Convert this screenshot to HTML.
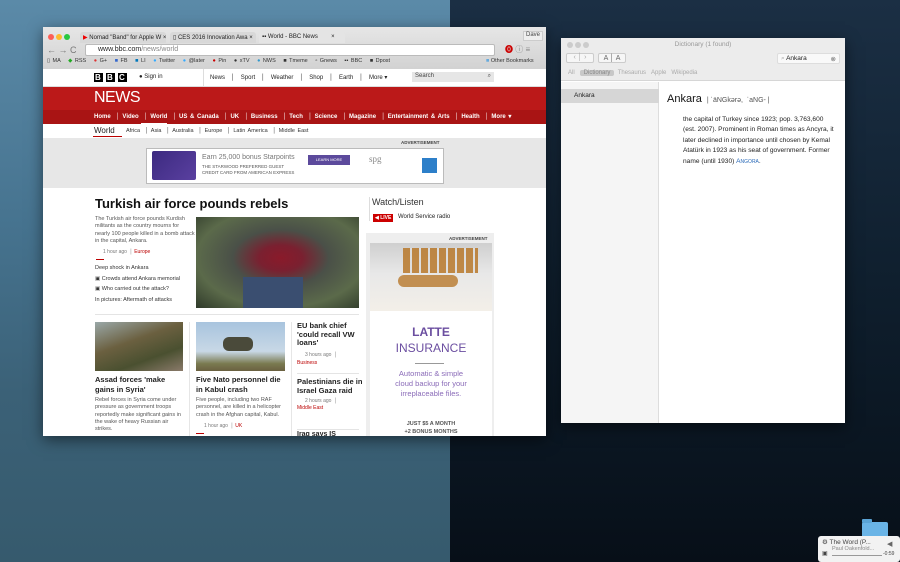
<!DOCTYPE html>
<html><head><meta charset="utf-8"><style>
*{margin:0;padding:0;box-sizing:border-box}
body{width:900px;height:562px;overflow:hidden;position:relative;font-family:"Liberation Sans",Arial,sans-serif;background:#0b1622}
.a{position:absolute}
.bgl{left:0;top:0;width:450px;height:562px;background:linear-gradient(180deg,#5b8aa8 0%,#46738f 40%,#3b6177 70%,#365a6d 100%)}
.bgr{left:450px;top:0;width:450px;height:562px;background:linear-gradient(180deg,#1b2f44 0%,#0f1f2e 50%,#070f18 100%)}
.t{white-space:nowrap}
</style></head><body>
<div class="a bgl"></div><div class="a bgr"></div>
<!-- browser -->
<div class="a" style="left:43px;top:27px;width:503px;height:409px;background:#fff;overflow:hidden;box-shadow:0 4px 14px rgba(0,0,0,.5)">
 <div class="a" style="left:0;top:0;width:503px;height:42px;background:linear-gradient(#e6e6e6,#d2d2d2)"></div>
 <div class="a" style="left:5px;top:7px;width:6px;height:6px;border-radius:50%;background:#fc5f57"></div>
 <div class="a" style="left:13px;top:7px;width:6px;height:6px;border-radius:50%;background:#fdbb2e"></div>
 <div class="a" style="left:21px;top:7px;width:6px;height:6px;border-radius:50%;background:#2ac840"></div>
 <div class="a t" style="left:37px;top:5px;width:86px;height:11px;background:#d8d8d8;border-radius:3px 3px 0 0;font-size:6px;padding:2px 3px;color:#222"><span style="color:#e00">▶</span> Nomad "Band" for Apple W ×</div>
 <div class="a t" style="left:127px;top:5px;width:86px;height:11px;background:#d8d8d8;border-radius:3px 3px 0 0;font-size:6px;padding:2px 3px;color:#222">▯ CES 2016 Innovation Awa ×</div>
 <div class="a t" style="left:216px;top:5px;width:86px;height:11px;background:#e4e4e4;border-radius:3px 3px 0 0;font-size:6px;padding:2px 3px;color:#222">▪▪ World - BBC News &nbsp;&nbsp;&nbsp;&nbsp;&nbsp;&nbsp;&nbsp;×</div>
 <div class="a t" style="left:480px;top:4px;width:20px;height:10px;background:#eee;border:1px solid #ccc;font-size:6px;text-align:center;color:#444">Dave</div>
 <div class="a t" style="left:4px;top:18px;font-size:9px;color:#777">← → C</div>
 <div class="a t" style="left:42px;top:17px;width:410px;height:12px;background:#fff;border:1px solid #bbb;border-radius:2px;font-size:7px;padding:1px 12px;color:#222">www.bbc.com<span style="color:#888">/news/world</span></div>
 <div class="a t" style="left:462px;top:17px;font-size:8px;color:#c00">⓿ <span style="color:#888">ⓘ ≡</span></div>
 <div class="a t" style="left:4px;top:31px;font-size:5.5px;color:#333;word-spacing:1px">▯ MA &nbsp;&nbsp;<span style="color:#2a2">◆</span> RSS &nbsp;&nbsp;<span style="color:#d33">●</span> G+ &nbsp;&nbsp;<span style="color:#36c">■</span> FB &nbsp;&nbsp;<span style="color:#07b">■</span> LI &nbsp;&nbsp;<span style="color:#3af">●</span> Twitter &nbsp;&nbsp;<span style="color:#3af">●</span> @later &nbsp;&nbsp;<span style="color:#c00">●</span> Pin &nbsp;&nbsp;● xTV &nbsp;&nbsp;<span style="color:#39c">●</span> NWS &nbsp;&nbsp;■ Tmeme &nbsp;&nbsp;▫ Gnews &nbsp;&nbsp;▪▪ BBC &nbsp;&nbsp;■ Dpost</div>
 <div class="a t" style="left:443px;top:31px;font-size:5.5px;color:#333"><span style="color:#6ad">■</span> Other Bookmarks</div>
 <!-- bbc top -->
 <div class="a" style="left:0;top:42px;width:503px;height:18px;background:#fff;border-bottom:1px solid #ddd"></div>
 <div class="a t" style="left:51px;top:46px;font-size:8px;font-weight:bold;color:#fff;letter-spacing:1px"><span style="background:#000;padding:0 1px">B</span> <span style="background:#000;padding:0 1px">B</span> <span style="background:#000;padding:0 1px">C</span></div>
 <div class="a t" style="left:96px;top:47px;font-size:6px;color:#222">● Sign in</div>
 <div class="a t" style="left:160px;top:42px;height:18px;font-size:6px;color:#222;line-height:18px;border-left:1px solid #ddd"><span style="padding:0 6px">News</span>│<span style="padding:0 6px">Sport</span>│<span style="padding:0 6px">Weather</span>│<span style="padding:0 6px">Shop</span>│<span style="padding:0 6px">Earth</span>│<span style="padding:0 36px 0 6px">More ▾</span></div>
 <div class="a t" style="left:369px;top:45px;width:82px;height:10px;background:#e6e6e6;font-size:6px;padding:1px 3px;color:#444">Search <span style="float:right">⌕</span></div>
 <!-- red -->
 <div class="a" style="left:0;top:60px;width:503px;height:37px;background:#bb1919"></div>
 <div class="a" style="left:0;top:83px;width:503px;height:14px;background:#a91414"></div>
 <div class="a t" style="left:51px;top:62px;font-size:16px;color:#fff;letter-spacing:-0.5px">NEWS</div>
 <div class="a t" style="left:51px;top:86px;font-size:6px;font-weight:bold;color:#fff;word-spacing:1px">Home &nbsp;│ Video &nbsp;│ World &nbsp;│ US &amp; Canada &nbsp;│ UK &nbsp;│ Business &nbsp;│ Tech &nbsp;│ Science &nbsp;│ Magazine &nbsp;│ Entertainment &amp; Arts &nbsp;│ Health &nbsp;│ More ▾</div>
 <div class="a" style="left:98px;top:96px;width:26px;height:1px;background:#fff"></div>
 <div class="a t" style="left:51px;top:99px;font-size:8px;color:#222">World</div>
 <div class="a" style="left:50px;top:109px;width:29px;height:1px;background:#b00"></div>
 <div class="a t" style="left:83px;top:101px;font-size:5.5px;color:#333;word-spacing:1px">Africa &nbsp;│ Asia &nbsp;│ Australia &nbsp;│ Europe &nbsp;│ Latin America &nbsp;│ Middle East</div>
 <!-- ad band -->
 <div class="a" style="left:0;top:111px;width:503px;height:50px;background:#e7e7e7"></div>
 <div class="a t" style="left:358px;top:113px;font-size:4.5px;font-weight:bold;color:#444">ADVERTISEMENT</div>
 <div class="a" style="left:103px;top:121px;width:298px;height:36px;background:#fff;border:1px solid #bbb"></div>
 <div class="a" style="left:109px;top:124px;width:44px;height:29px;background:linear-gradient(135deg,#3c2a80,#5a40a0);border-radius:2px"></div>
 <div class="a t" style="left:159px;top:127px;font-size:7px;color:#777">Earn 25,000 bonus Starpoints</div>
 <div class="a t" style="left:159px;top:137px;font-size:4.5px;color:#555;line-height:6px">THE STARWOOD PREFERRED GUEST<br>CREDIT CARD FROM AMERICAN EXPRESS</div>
 <div class="a" style="left:265px;top:128px;width:42px;height:10px;background:#5c4a9c;font-size:4px;color:#fff;text-align:center;line-height:10px">LEARN MORE</div>
 <div class="a t" style="left:326px;top:127px;font-size:9px;color:#888;font-family:'Liberation Serif',serif">spg</div>
 <div class="a" style="left:379px;top:131px;width:15px;height:15px;background:#2d7fc9"></div>
 <!-- main -->
 <div class="a t" style="left:52px;top:169px;font-size:13px;font-weight:bold;color:#111">Turkish air force pounds rebels</div>
 <div class="a" style="left:52px;top:189px;width:100px;font-size:5.5px;color:#555;line-height:7.3px">The Turkish air force pounds Kurdish militants as the country mourns for nearly 100 people killed in a bomb attack in the capital, Ankara.</div>
 <div class="a t" style="left:60px;top:222px;font-size:5px;color:#777">1 hour ago &nbsp;│ <span style="color:#b00">Europe</span></div>
 <div class="a" style="left:53px;top:232px;width:8px;height:1px;background:#b00"></div>
 <div class="a t" style="left:52px;top:236px;font-size:5.5px;color:#333;line-height:10.6px">Deep shock in Ankara<br>▣ Crowds attend Ankara memorial<br>▣ Who carried out the attack?<br>In pictures: Aftermath of attacks</div>
 <div class="a" style="left:153px;top:190px;width:163px;height:91px;background:radial-gradient(ellipse at 52% 45%,#8a1a2a 0%,#7a2030 18%,#4a5048 40%,#5b6a4a 70%,#2f3a2a 100%)"></div>
 <div class="a" style="left:200px;top:250px;width:60px;height:31px;background:#3a4e70"></div>
 <div class="a" style="left:52px;top:287px;width:264px;height:1px;background:#e4e4e4"></div>
 <div class="a t" style="left:329px;top:170px;font-size:9px;color:#333">Watch/Listen</div>
 <div class="a" style="left:326px;top:170px;width:1px;height:24px;background:#ddd"></div>
 <div class="a t" style="left:330px;top:187px;font-size:5px;font-weight:bold;color:#fff;background:#c00;padding:1px 2px">◀ LIVE</div>
 <div class="a t" style="left:355px;top:187px;font-size:6px;color:#222">World Service radio</div>
 <!-- right ad -->
 <div class="a" style="left:323px;top:206px;width:128px;height:210px;background:#eee"></div>
 <div class="a t" style="left:406px;top:209px;font-size:4.5px;font-weight:bold;color:#444">ADVERTISEMENT</div>
 <div class="a" style="left:327px;top:216px;width:122px;height:68px;background:linear-gradient(180deg,#cfcfcf 0%,#e8e8e8 45%,#f3efe8 100%)"></div>
 <div class="a" style="left:360px;top:221px;width:75px;height:25px;background:repeating-linear-gradient(90deg,#b8782a 0 7px,#ddd 7px 9px);opacity:.85"></div>
 <div class="a" style="left:355px;top:248px;width:60px;height:12px;background:#b8782a;border-radius:6px;opacity:.8"></div>
 <div class="a" style="left:327px;top:284px;width:122px;height:130px;background:#fff"></div>
 <div class="a t" style="left:327px;top:298px;width:122px;text-align:center;font-size:12px;font-weight:bold;color:#6b4ea0">LATTE</div>
 <div class="a t" style="left:327px;top:314px;width:122px;text-align:center;font-size:12px;color:#6b4ea0">INSURANCE</div>
 <div class="a" style="left:372px;top:336px;width:29px;height:1px;background:#999"></div>
 <div class="a t" style="left:327px;top:342px;width:122px;text-align:center;font-size:7.5px;color:#8a6bb8;line-height:10px">Automatic &amp; simple<br>cloud backup for your<br>irreplaceable files.</div>
 <div class="a t" style="left:327px;top:393px;width:122px;text-align:center;font-size:5.5px;font-weight:bold;color:#555;line-height:8px">JUST $5 A MONTH<br>+2 BONUS MONTHS</div>
 <!-- row 2 -->
 <div class="a" style="left:52px;top:295px;width:88px;height:49px;background:linear-gradient(160deg,#9aa8a8 0%,#6b6040 40%,#4a5030 70%,#8a7a6a 100%)"></div>
 <div class="a" style="left:153px;top:295px;width:89px;height:49px;background:linear-gradient(180deg,#a8c4de 0%,#c8d8e6 60%,#7a7a50 85%,#6a6040 100%)"></div>
 <div class="a" style="left:180px;top:310px;width:30px;height:14px;background:#4a4a3a;border-radius:6px"></div>
 <div class="a" style="left:146px;top:295px;width:1px;height:114px;background:#e6e6e6"></div>
 <div class="a" style="left:248px;top:295px;width:1px;height:114px;background:#e6e6e6"></div>
 <div class="a" style="left:52px;top:348px;width:90px;font-size:7.5px;font-weight:bold;color:#222;line-height:10px">Assad forces 'make gains in Syria'</div>
 <div class="a" style="left:52px;top:370px;width:90px;font-size:5.5px;color:#555;line-height:7.3px">Rebel forces in Syria come under pressure as government troops reportedly make significant gains in the wake of heavy Russian air strikes.</div>
 <div class="a t" style="left:153px;top:348px;font-size:7.5px;font-weight:bold;color:#222;line-height:10px">Five Nato personnel die<br>in Kabul crash</div>
 <div class="a" style="left:153px;top:370px;width:92px;font-size:5.5px;color:#555;line-height:7.3px">Five people, including two RAF personnel, are killed in a helicopter crash in the Afghan capital, Kabul.</div>
 <div class="a t" style="left:161px;top:396px;font-size:5px;color:#777">1 hour ago &nbsp;│ <span style="color:#b00">UK</span></div>
 <div class="a" style="left:153px;top:406px;width:8px;height:1px;background:#b00"></div>
 <div class="a t" style="left:254px;top:295px;font-size:7.5px;font-weight:bold;color:#222;line-height:8.7px">EU bank chief<br>'could recall VW<br>loans'</div>
 <div class="a t" style="left:262px;top:325px;font-size:5px;color:#777">3 hours ago &nbsp;│</div>
 <div class="a t" style="left:254px;top:333px;font-size:5px;color:#b00">Business</div>
 <div class="a" style="left:254px;top:346px;width:62px;height:1px;background:#e4e4e4"></div>
 <div class="a t" style="left:254px;top:350px;font-size:7.5px;font-weight:bold;color:#222;line-height:9px">Palestinians die in<br>Israel Gaza raid</div>
 <div class="a t" style="left:262px;top:371px;font-size:5px;color:#777">2 hours ago &nbsp;│</div>
 <div class="a t" style="left:254px;top:378px;font-size:5px;color:#b00">Middle East</div>
 <div class="a" style="left:254px;top:402px;width:62px;height:1px;background:#e4e4e4"></div>
 <div class="a t" style="left:254px;top:404px;font-size:7px;font-weight:bold;color:#222">Iraq says IS</div>
</div>
<!-- dictionary -->
<div class="a" style="left:561px;top:38px;width:284px;height:385px;background:#fff;overflow:hidden;box-shadow:0 4px 14px rgba(0,0,0,.5)">
 <div class="a" style="left:0;top:0;width:284px;height:43px;background:#ececec;border-bottom:1px solid #d6d6d6"></div>
 <div class="a" style="left:6px;top:4px;width:6px;height:6px;border-radius:50%;background:#ccc"></div>
 <div class="a" style="left:14px;top:4px;width:6px;height:6px;border-radius:50%;background:#ccc"></div>
 <div class="a" style="left:22px;top:4px;width:6px;height:6px;border-radius:50%;background:#ccc"></div>
 <div class="a t" style="left:0;top:3px;width:284px;text-align:center;font-size:6.5px;color:#999">Dictionary (1 found)</div>
 <div class="a t" style="left:5px;top:15px;width:28px;height:10px;border:1px solid #ccc;border-radius:2px;background:#f6f6f6;font-size:7px;color:#aaa;text-align:center;line-height:8px">‹ │ ›</div>
 <div class="a t" style="left:37px;top:15px;width:28px;height:10px;border:1px solid #ccc;border-radius:2px;background:#f6f6f6;font-size:7px;color:#666;text-align:center;line-height:9px">A │ A</div>
 <div class="a t" style="left:216px;top:15px;width:63px;height:11px;border:1px solid #ddd;border-radius:2px;background:#f9f9f9;font-size:6.5px;color:#222;padding:1px 3px"><span style="color:#aaa">⌕</span> Ankara<span style="float:right;color:#666">⊗</span></div>
 <div class="a t" style="left:7px;top:32px;font-size:6px;color:#aaa">All &nbsp;&nbsp;<span style="background:#c8c8c8;color:#888;padding:0 4px;border-radius:2px">Dictionary</span> &nbsp;Thesaurus &nbsp;&nbsp;Apple &nbsp;&nbsp;Wikipedia</div>
 <div class="a" style="left:0;top:44px;width:98px;height:341px;background:#f5f5f5;border-right:1px solid #ddd"></div>
 <div class="a t" style="left:0;top:51px;width:98px;height:14px;background:#d6d6d6;font-size:6.5px;color:#222;padding:3px 13px">Ankara</div>
 <div class="a t" style="left:106px;top:55px;font-size:11px;color:#111">Ankara <span style="font-size:7px;color:#555">&nbsp;| ˈäNGkərə, &nbsp;ˈaNG- |</span></div>
 <div class="a" style="left:122px;top:77px;width:154px;font-size:6.6px;color:#222;line-height:10.4px">the capital of Turkey since 1923; pop. 3,763,600 (est. 2007). Prominent in Roman times as Ancyra, it later declined in importance until chosen by Kemal Atatürk in 1923 as his seat of government. Former name (until 1930) <span style="color:#2a6ab8;font-variant:small-caps">Angora</span>.</div>
</div>
<!-- folder & widget -->
<div class="a" style="left:862px;top:522px;width:26px;height:18px;background:#6ab4e6;border-radius:2px"></div>
<div class="a" style="left:862px;top:519px;width:10px;height:4px;background:#5aa4d6;border-radius:1px"></div>
<div class="a" style="left:818px;top:536px;width:82px;height:26px;background:#f2f2f2;border-radius:3px"></div>
<div class="a t" style="left:822px;top:538px;font-size:6.5px;color:#444">⚙ The Word (P...</div>
<div class="a t" style="left:832px;top:546px;font-size:5.5px;color:#888">Paul Oakenfold...</div>
<div class="a t" style="left:887px;top:540px;font-size:7px;color:#666">◀</div>
<div class="a" style="left:832px;top:555px;width:50px;height:1px;background:#999"></div>
<div class="a t" style="left:883px;top:551px;font-size:5px;color:#444">-0:59</div>
<div class="a t" style="left:822px;top:550px;font-size:6px;color:#444">▣</div>
</body></html>
